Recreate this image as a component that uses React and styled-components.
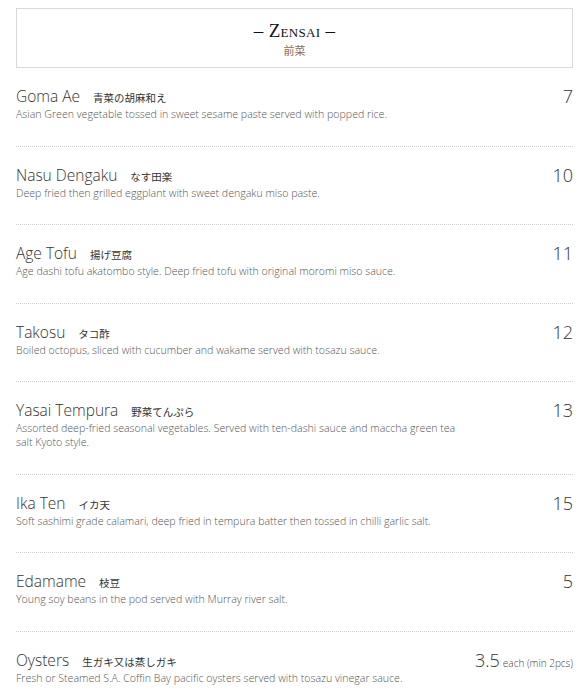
import React from 'react';
import styled, { createGlobalStyle } from 'styled-components';

const GlobalStyle = createGlobalStyle`
  body {
    margin: 0;
    background: #ffffff;
    font-family: "Open Sans", "Noto Sans CJK JP", sans-serif;
  }
`;

const Page = styled.div`
  padding: 8px 13px 0 16px;
`;

const Header = styled.div`
  border: 1px solid #d9d9d9;
  height: 58px;
  display: flex;
  flex-direction: column;
  align-items: center;
  justify-content: center;
  gap: 1px;
`;

const Title = styled.h2`
  margin: 0;
  font-family: "Liberation Serif", "Times New Roman", serif;
  font-variant: small-caps;
  font-weight: normal;
  font-size: 19px;
  line-height: 22px;
  color: #111;
  letter-spacing: 0.3px;
`;

const SubTitle = styled.div`
  font-family: "Noto Sans CJK JP", serif;
  font-size: 11px;
  line-height: 14px;
  color: #8c6b55;
`;

const List = styled.div`
  display: flex;
  flex-direction: column;
`;

const Item = styled.div`
  display: flex;
  justify-content: space-between;
  align-items: flex-start;
  padding: 18px 0 24.5px;
  border-bottom: ${(p) => (p.last ? 'none' : '1px dotted #cfcfcf')};
`;

const Info = styled.div`
  max-width: 446px;
`;

const NameRow = styled.div`
  display: flex;
  align-items: baseline;
  height: 20px;
  line-height: 20px;
  white-space: nowrap;
`;

const Name = styled.span`
  font-size: 15.5px;
  font-weight: 300;
  color: #333;
`;

const Jp = styled.span`
  font-family: "Noto Sans CJK JP", sans-serif;
  font-size: 10.5px;
  line-height: 1;
  color: #333;
  margin-left: 13px;
`;

const Desc = styled.p`
  margin: 1px 0 0;
  font-size: 10.6px;
  line-height: 14px;
  font-weight: 300;
  color: #555;
`;

const Price = styled.div`
  font-size: 18px;
  font-weight: 300;
  line-height: 20px;
  color: #333;
  white-space: nowrap;
`;

const Note = styled.span`
  font-size: 10px;
  margin-left: 3px;
  color: #444;
`;

const items = [
  { name: 'Goma Ae', jp: '青菜の胡麻和え', desc: 'Asian Green vegetable tossed in sweet sesame paste served with popped rice.', price: '7' },
  { name: 'Nasu Dengaku', jp: 'なす田楽', desc: 'Deep fried then grilled eggplant with sweet dengaku miso paste.', price: '10' },
  { name: 'Age Tofu', jp: '揚げ豆腐', desc: 'Age dashi tofu akatombo style. Deep fried tofu with original moromi miso sauce.', price: '11' },
  { name: 'Takosu', jp: 'タコ酢', desc: 'Boiled octopus, sliced with cucumber and wakame served with tosazu sauce.', price: '12' },
  { name: 'Yasai Tempura', jp: '野菜てんぷら', desc: 'Assorted deep-fried seasonal vegetables. Served with ten-dashi sauce and maccha green tea salt Kyoto style.', price: '13' },
  { name: 'Ika Ten', jp: 'イカ天', desc: 'Soft sashimi grade calamari, deep fried in tempura batter then tossed in chilli garlic salt.', price: '15' },
  { name: 'Edamame', jp: '枝豆', desc: 'Young soy beans in the pod served with Murray river salt.', price: '5' },
  { name: 'Oysters', jp: '生ガキ又は蒸しガキ', desc: 'Fresh or Steamed S.A. Coffin Bay pacific oysters served with tosazu vinegar sauce.', price: '3.5', note: 'each (min 2pcs)' },
];

const App = () => {
  return (
    <Page>
      <GlobalStyle />
      <Header>
        <Title>– Zensai –</Title>
        <SubTitle>前菜</SubTitle>
      </Header>
      <List>
        {items.map((item, i) => (
          <Item key={item.name} last={i === items.length - 1}>
            <Info>
              <NameRow>
                <Name>{item.name}</Name>
                <Jp>{item.jp}</Jp>
              </NameRow>
              <Desc>{item.desc}</Desc>
            </Info>
            <Price>
              {item.price}
              {item.note && <Note>{item.note}</Note>}
            </Price>
          </Item>
        ))}
      </List>
    </Page>
  );
};

export default App;
